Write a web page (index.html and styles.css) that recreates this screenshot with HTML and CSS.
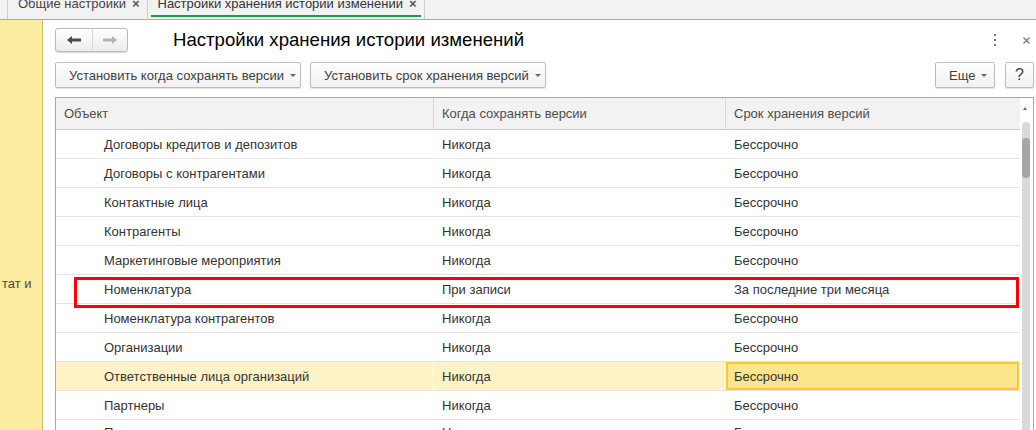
FILE: index.html
```html
<!DOCTYPE html>
<html lang="ru">
<head>
    <meta charset="UTF-8">
    <meta name="viewport" content="width=device-width, initial-scale=1.0">
    <title>Настройки хранения истории изменений</title>
    <link rel="stylesheet" href="styles.css">
</head>
<body>

<div class="tabs">
    <div class="tab"><div class="tab-in">Общие настройки<span class="tab-x">×</span></div></div>
    <div class="tab active"><div class="tab-in">Настройки хранения истории изменений<span class="tab-x">×</span></div></div>
</div>

<div class="main">
    <div class="side">
        <div class="side-text">тат и</div>
    </div>

    <div class="window">
        <div class="head">
            <div class="nav">
                <button class="nav-btn back">
                    <svg width="14" height="8" viewBox="0 0 14 8"><path d="M0 4 L5 0 L5 2.6 L14 2.6 L14 5.4 L5 5.4 L5 8 Z" fill="#4a4a4a"/></svg>
                </button>
                <button class="nav-btn fwd">
                    <svg width="14" height="8" viewBox="0 0 14 8"><path d="M14 4 L9 0 L9 2.6 L0 2.6 L0 5.4 L9 5.4 L9 8 Z" fill="#b4b4b4"/></svg>
                </button>
            </div>
            <h1 class="title">Настройки хранения истории изменений</h1>
            <div class="head-icons">
                <svg class="kebab" width="4" height="12" viewBox="0 0 4 12"><rect x="1" y="0" width="2" height="2" fill="#7a7a7a"/><rect x="1" y="5" width="2" height="2" fill="#7a7a7a"/><rect x="1" y="10" width="2" height="2" fill="#7a7a7a"/></svg>
                <svg class="close" width="7" height="7" viewBox="0 0 7 7"><path d="M0.5 0.5 L6.5 6.5 M6.5 0.5 L0.5 6.5" stroke="#707070" stroke-width="1.1"/></svg>
            </div>
        </div>

        <div class="toolbar">
            <button class="btn btn-wide">Установить когда сохранять версии<span class="caret"></span></button>
            <button class="btn btn-mid">Установить срок хранения версий<span class="caret"></span></button>
            <button class="btn btn-more">Еще<span class="caret"></span></button>
            <button class="btn btn-help">?</button>
        </div>

        <div class="grid">
            <div class="cols">
                <div class="row hdr">
                    <div class="c c1">Объект</div>
                    <div class="c c2">Когда сохранять версии</div>
                    <div class="c c3">Срок хранения версий</div>
                </div>
                <div class="row">
                    <div class="c c1">Договоры кредитов и депозитов</div>
                    <div class="c c2">Никогда</div>
                    <div class="c c3">Бессрочно</div>
                </div>
                <div class="row">
                    <div class="c c1">Договоры с контрагентами</div>
                    <div class="c c2">Никогда</div>
                    <div class="c c3">Бессрочно</div>
                </div>
                <div class="row">
                    <div class="c c1">Контактные лица</div>
                    <div class="c c2">Никогда</div>
                    <div class="c c3">Бессрочно</div>
                </div>
                <div class="row">
                    <div class="c c1">Контрагенты</div>
                    <div class="c c2">Никогда</div>
                    <div class="c c3">Бессрочно</div>
                </div>
                <div class="row">
                    <div class="c c1">Маркетинговые мероприятия</div>
                    <div class="c c2">Никогда</div>
                    <div class="c c3">Бессрочно</div>
                </div>
                <div class="row">
                    <div class="c c1">Номенклатура</div>
                    <div class="c c2">При записи</div>
                    <div class="c c3">За последние три месяца</div>
                </div>
                <div class="row">
                    <div class="c c1">Номенклатура контрагентов</div>
                    <div class="c c2">Никогда</div>
                    <div class="c c3">Бессрочно</div>
                </div>
                <div class="row">
                    <div class="c c1">Организации</div>
                    <div class="c c2">Никогда</div>
                    <div class="c c3">Бессрочно</div>
                </div>
                <div class="row sel">
                    <div class="c c1">Ответственные лица организаций</div>
                    <div class="c c2">Никогда</div>
                    <div class="c c3">Бессрочно</div>
                </div>
                <div class="row">
                    <div class="c c1">Партнеры</div>
                    <div class="c c2">Никогда</div>
                    <div class="c c3">Бессрочно</div>
                </div>
                <div class="row last">
                    <div class="c c1">Пользователи</div>
                    <div class="c c2">Никогда</div>
                    <div class="c c3">Бессрочно</div>
                </div>
            </div>
            <div class="scroll">
                <div class="scroll-up"></div>
                <div class="scroll-track"><div class="scroll-thumb"></div></div>
            </div>
            <!-- выделение строки -->
            <div class="mark"></div>
        </div>
    </div>
</div>

</body>
</html>
```

FILE: styles.css
```css
html, body {
    margin: 0;
    height: 100%;
    overflow: hidden;
}
body {
    font-family: "Liberation Sans", Arial, sans-serif;
    font-size: 13px;
    color: #333;
    background: #fff;
}

/* вкладки */
.tabs {
    display: flex;
    height: 19px;
    padding-left: 7px;
    background: #f2f2f2;
    border-bottom: 1px solid #a9a9a9;
    overflow: hidden;
}
.tab {
    padding: 0 3px;
    border-left: 1px solid #cfcfcf;
}
.tab:last-child {
    border-right: 1px solid #cfcfcf;
}
.tab-in {
    display: flex;
    margin-top: -4px;
    height: 19px;
    line-height: 15px;
    padding: 0 4px 0 7px;
    color: #444;
    white-space: nowrap;
    border-bottom: 2px solid transparent;
}
.tab.active .tab-in {
    color: #333;
    border-bottom-color: #1e9a46;
}
.tab-x {
    margin-left: 6px;
    font-weight: bold;
    color: #555;
}

/* основная область */
.main {
    display: flex;
    height: 410px;
}
.side {
    width: 42px;
    flex: none;
    background: #fcec9f;
    border-right: 1px solid #cdbb74;
    overflow: hidden;
}
.side-text {
    margin-top: 256px;
    padding-left: 2px;
    line-height: 15px;
    color: #4a4a4a;
    white-space: nowrap;
}
.window {
    flex: 1;
    padding: 8px 2px 0 12px;
    min-width: 0;
}

.head {
    display: flex;
    align-items: center;
    height: 24px;
}
.nav {
    display: flex;
    width: 73px;
    height: 24px;
    box-sizing: border-box;
    border: 1px solid #bababa;
    border-radius: 3px;
    background: linear-gradient(#ffffff, #ececec);
    box-shadow: 0 1px 1px rgba(0, 0, 0, 0.15);
}
.nav-btn {
    display: flex;
    align-items: center;
    justify-content: center;
    border: none;
    background: none;
    padding: 0;
}
.nav-btn.back {
    width: 37px;
    border-right: 1px solid #d6d6d6;
}
.nav-btn.fwd {
    flex: 1;
}
.title {
    margin: 0 0 0 45px;
    font-size: 18.6px;
    font-weight: normal;
    color: #000;
    white-space: nowrap;
}
.head-icons {
    margin-left: auto;
    margin-right: 4px;
    display: flex;
    align-items: center;
    gap: 26px;
}

/* панель кнопок */
.toolbar {
    display: flex;
    margin-top: 10px;
    height: 26px;
}
.btn {
    display: flex;
    align-items: center;
    justify-content: space-between;
    height: 26px;
    box-sizing: border-box;
    border: 1px solid #bdbdbd;
    border-radius: 2px;
    background: linear-gradient(#ffffff, #f1f1f1);
    box-shadow: 0 1px 1px rgba(0, 0, 0, 0.12);
    font-family: "Liberation Sans", Arial, sans-serif;
    font-size: 13px;
    color: #404040;
    white-space: nowrap;
    padding: 0 7px 0 13px;
}
.caret {
    margin-left: 6px;
    width: 0;
    height: 0;
    border-left: 3px solid transparent;
    border-right: 3px solid transparent;
    border-top: 3px solid #666;
}
.btn-wide {
    width: 246px;
}
.btn-mid {
    width: 236px;
    margin-left: 9px;
}
.btn-more {
    width: 60px;
    margin-left: auto;
}
.btn-help {
    width: 29px;
    margin-left: 10px;
    justify-content: center;
    padding: 0;
    font-size: 16px;
}

/* таблица */
.grid {
    position: relative;
    display: flex;
    margin-top: 9px;
    height: 340px;
    border: 1px solid #a8a8a8;
    border-bottom: none;
    overflow: hidden;
}
.cols {
    width: 964px;
    flex: none;
}
.row {
    display: grid;
    grid-template-columns: 377px 292px 295px;
    height: 28px;
    line-height: 30px;
    overflow: hidden;
    border-bottom: 1px solid #e3e3e3;
}
.row.last {
    line-height: 26px;
}
.row.hdr {
    height: 31px;
    line-height: 31px;
    background: #f2f2f2;
    color: #4d4d4d;
    border-bottom-color: #cacaca;
}
.c {
    padding-left: 8px;
    white-space: nowrap;
    overflow: hidden;
}
.c2, .c3 {
    border-left: 1px solid #fff;
}
.hdr .c2, .hdr .c3 {
    border-left-color: #d8d8d8;
}
.row .c1 {
    padding-left: 48px;
}
.row.hdr .c1 {
    padding-left: 8px;
}
.row.sel .c1, .row.sel .c2 {
    background: #fef3c6;
}
.row.sel .c3 {
    background: #fde58b;
    box-shadow: inset 0 0 0 2px #f9c92d;
    margin-right: 1px;
}

.scroll {
    flex: 1;
    display: flex;
    flex-direction: column;
}
.scroll-up {
    margin: 9px 0 0 3px;
    width: 0;
    height: 0;
    border-left: 2.5px solid transparent;
    border-right: 2.5px solid transparent;
    border-bottom: 3px solid #6e6e6e;
}
.scroll-track {
    margin: 12px 0 0 2px;
    width: 8px;
    flex: 1;
    background: #d9d9d9;
    border-radius: 4px 4px 0 0;
}
.scroll-thumb {
    margin-top: 16px;
    height: 40px;
    background: #a6a6a6;
    border-radius: 4px;
}

.mark {
    position: absolute;
    left: 18px;
    top: 179px;
    width: 945px;
    height: 31px;
    box-sizing: border-box;
    border: 3px solid #ff0000;
}
```
